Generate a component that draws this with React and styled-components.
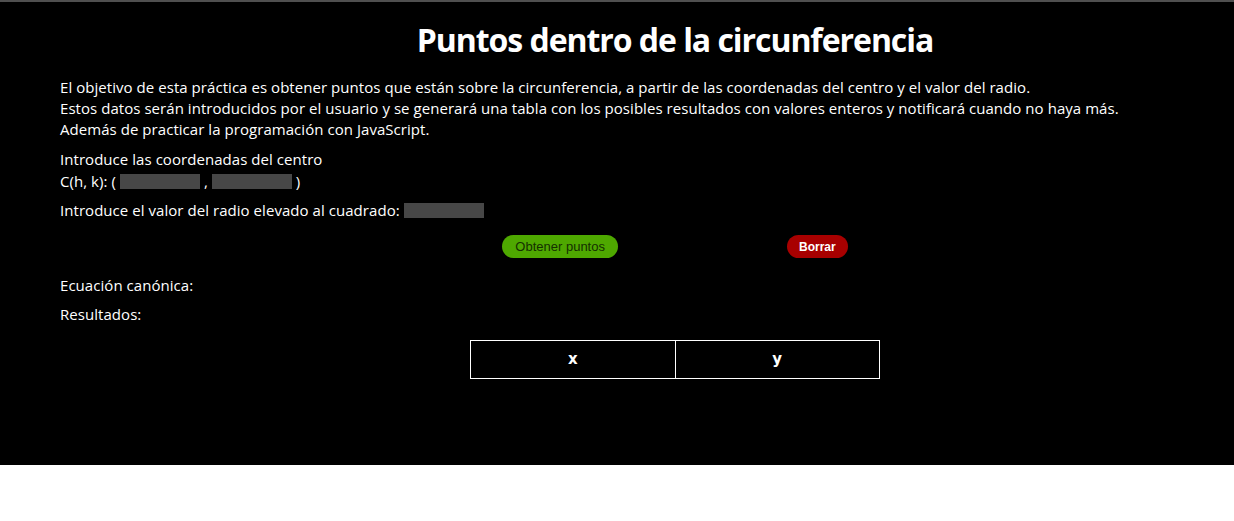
import React from "react";
import styled, { createGlobalStyle } from "styled-components";

const Global = createGlobalStyle`
  html, body { margin: 0; padding: 0; background: #ffffff; }
  * { box-sizing: border-box; }
`;

const Page = styled.main`
  background: #000000;
  border-top: 2px solid #4f4f4f;
  padding: 18px 0 86px 60px;
  color: #ffffff;
  font-family: "Open Sans", "Noto Sans", sans-serif;
  font-size: 15px;
  line-height: 21px;
  letter-spacing: 0.05px;
`;

const Centered = styled.div`
  margin-left: 56px;
  display: flex;
  justify-content: center;
  margin-top: ${(p) => p.$top || 0}px;
`;

const Title = styled.h1`
  margin: 0;
  font-size: 32px;
  line-height: 40px;
  font-weight: 700;
  letter-spacing: -1.05px;
`;

const Intro = styled.p`
  margin: 17px 0 0;
`;

const Line = styled.div`
  margin-top: ${(p) => p.$top || 0}px;
`;

const FieldRow = styled.div`
  display: flex;
  align-items: center;
  gap: 4px;
  height: 21px;
  margin-top: ${(p) => p.$top || 0}px;
`;

const Field = styled.input`
  width: 80px;
  height: 15px;
  border: none;
  background: #474747;
  padding: 0;
  margin: 0;
  outline: none;
`;

const ButtonRow = styled(Centered)`
  gap: 169px;
`;

const Pill = styled.button`
  height: 23px;
  border: none;
  border-radius: 12px;
  font-family: "Liberation Sans", Arial, sans-serif;
  font-size: ${(p) => (p.$danger ? "12px" : "13px")};
  font-weight: ${(p) => (p.$danger ? 700 : 400)};
  padding: 0 ${(p) => (p.$danger ? 12 : 13)}px;
  background: ${(p) => (p.$danger ? "#a80000" : "#4ea800")};
  color: ${(p) => (p.$danger ? "#ffffff" : "#143000")};
  cursor: pointer;
`;

const Table = styled.table`
  border-collapse: collapse;
  width: 410px;
`;

const Th = styled.th`
  border: 1px solid #ffffff;
  height: 38px;
  width: 50%;
  padding: 0;
  font-family: "DejaVu Sans", sans-serif;
  font-size: 15px;
  font-weight: 700;
  color: #ffffff;
`;

export default function App() {
  return (
    <>
      <Global />
      <Page>
        <Centered>
          <Title>Puntos dentro de la circunferencia</Title>
        </Centered>
        <Intro>
          El objetivo de esta práctica es obtener puntos que están sobre la circunferencia, a partir de las coordenadas del centro y el valor del radio.
          <br />
          Estos datos serán introducidos por el usuario y se generará una tabla con los posibles resultados con valores enteros y notificará cuando no haya más.
          <br />
          Además de practicar la programación con JavaScript.
        </Intro>
        <Line $top={9}>Introduce las coordenadas del centro</Line>
        <FieldRow $top={1}>
          <span>C(h, k): (</span>
          <Field type="text" />
          <span>,</span>
          <Field type="text" />
          <span>)</span>
        </FieldRow>
        <FieldRow $top={8}>
          <span>Introduce el valor del radio elevado al cuadrado:</span>
          <Field type="text" />
        </FieldRow>
        <ButtonRow $top={14}>
          <Pill>Obtener puntos</Pill>
          <Pill $danger>Borrar</Pill>
        </ButtonRow>
        <Line $top={17}>Ecuación canónica:</Line>
        <Line $top={8}>Resultados:</Line>
        <Centered $top={15}>
          <Table>
            <thead>
              <tr>
                <Th>x</Th>
                <Th>y</Th>
              </tr>
            </thead>
          </Table>
        </Centered>
      </Page>
    </>
  );
}
